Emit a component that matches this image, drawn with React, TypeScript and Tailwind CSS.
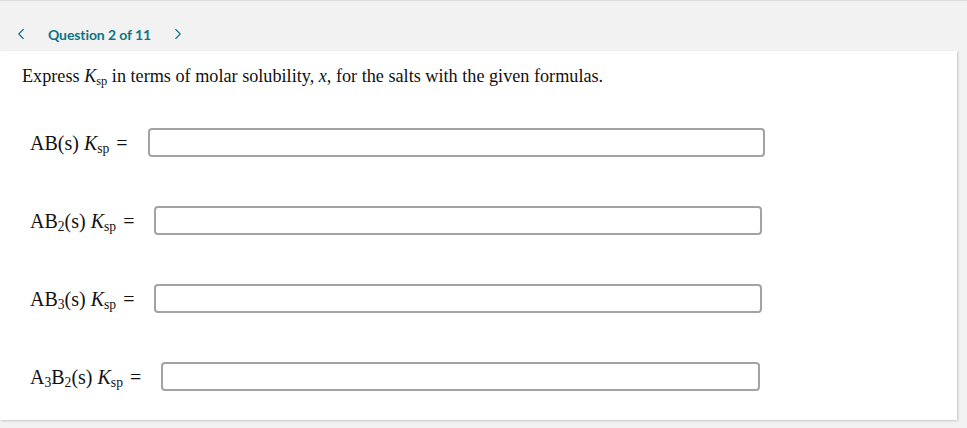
import React from 'react';
import { ChevronLeft, ChevronRight } from 'lucide-react';

const Ksp = () => (
  <span>
    <i>K</i>
    <sub className="text-[0.68em] not-italic">sp</sub>
  </span>
);

const Sub = ({ children }: { children: React.ReactNode }) => (
  <sub className="text-[0.68em]">{children}</sub>
);

const rows = [
  { id: 1, label: <>AB(s)</>, width: 'w-[617px]' },
  { id: 2, label: <>AB<Sub>2</Sub>(s)</>, width: 'w-[608px]' },
  { id: 3, label: <>AB<Sub>3</Sub>(s)</>, width: 'w-[608px]' },
  { id: 4, label: <>A<Sub>3</Sub>B<Sub>2</Sub>(s)</>, width: 'w-[599px]' },
];

export default function App() {
  return (
    <div className="w-[967px] h-[428px] bg-[#f2f2f2] border-t border-[#dcdcdc] overflow-hidden">
      <nav className="h-[50px] flex items-center text-[#0b7586] font-['Lato',sans-serif] pt-[16px]">
        <ChevronLeft className="ml-[12px] w-[18px] h-[18px]" strokeWidth={1.5} />
        <span className="ml-[18px] text-[14px] font-bold tracking-[-0.1px]">Question 2 of 11</span>
        <ChevronRight className="ml-[18px] w-[18px] h-[18px]" strokeWidth={1.5} />
      </nav>
      <main className="w-[957px] h-[369px] bg-white shadow-[1px_1px_2px_rgba(0,0,0,0.18)] pt-[13px] font-['Liberation_Serif',serif] text-[#111]">
        <p className="pl-[22px] text-[18.2px] leading-6">
          Express <Ksp /> in terms of molar solubility, <i>x</i>, for the salts with the given formulas.
        </p>
        <div className="mt-[40px] flex flex-col gap-[49px] pl-[30px]">
          {rows.map((r) => (
            <div key={r.id} className="flex items-center h-[29px]">
              <span className="text-[20px] whitespace-nowrap">
                {r.label}
                <span className="ml-[5px]">
                  <Ksp />
                </span>
                <span className="ml-[7px]">=</span>
              </span>
              <input
                type="text"
                className={`${r.width} ml-[20px] h-[29px] border-2 border-[#a3a3a3] rounded-[4px] bg-white outline-none`}
              />
            </div>
          ))}
        </div>
      </main>
    </div>
  );
}
